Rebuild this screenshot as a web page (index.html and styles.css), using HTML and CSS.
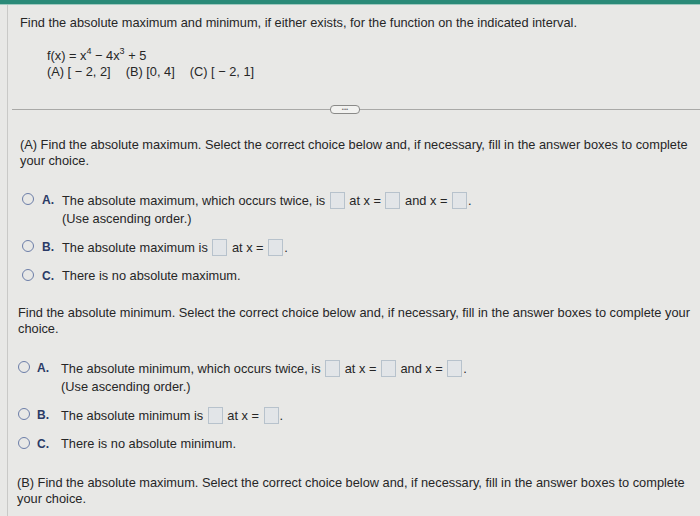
FILE: index.html
```html
<!DOCTYPE html>
<html>
<head>
<meta charset="utf-8">
<link rel="stylesheet" href="styles.css">
</head>
<body>
<div class="topbar"></div>
<div class="page">
  <div class="question">
    <p class="prompt">Find the absolute maximum and minimum, if either exists, for the function on the indicated interval.</p>
    <div class="func">
      <div>f(x) = x<sup>4</sup> − 4x<sup>3</sup> + 5</div>
      <div class="intervals"><span>(A) [ − 2, 2]</span><span>(B) [0, 4]</span><span>(C) [ − 2, 1]</span></div>
    </div>
  </div>
  <div class="divider"><span class="line"></span><span class="pill">•••</span><span class="line"></span></div>
  <div class="part part1">
    <p class="instr">(A) Find the absolute maximum. Select the correct choice below and, if necessary, fill in the answer boxes to complete your choice.</p>
    <div class="choices">
      <div class="choice">
        <span class="radio"></span><span class="letter">A.</span>
        <div class="ctext">
          <div>The absolute maximum, which occurs twice, is <span class="box"></span> at x = <span class="box"></span> and x = <span class="box"></span>.</div>
          <div>(Use ascending order.)</div>
        </div>
      </div>
      <div class="choice">
        <span class="radio"></span><span class="letter">B.</span>
        <div class="ctext"><div>The absolute maximum is <span class="box"></span> at x = <span class="box"></span>.</div></div>
      </div>
      <div class="choice">
        <span class="radio"></span><span class="letter">C.</span>
        <div class="ctext"><div>There is no absolute maximum.</div></div>
      </div>
    </div>
  </div>
  <div class="part part2">
    <p class="instr">Find the absolute minimum. Select the correct choice below and, if necessary, fill in the answer boxes to complete your choice.</p>
    <div class="choices">
      <div class="choice">
        <span class="radio"></span><span class="letter">A.</span>
        <div class="ctext">
          <div>The absolute minimum, which occurs twice, is <span class="box"></span> at x = <span class="box"></span> and x = <span class="box"></span>.</div>
          <div>(Use ascending order.)</div>
        </div>
      </div>
      <div class="choice">
        <span class="radio"></span><span class="letter">B.</span>
        <div class="ctext"><div>The absolute minimum is <span class="box"></span> at x = <span class="box"></span>.</div></div>
      </div>
      <div class="choice">
        <span class="radio"></span><span class="letter">C.</span>
        <div class="ctext"><div>There is no absolute minimum.</div></div>
      </div>
    </div>
  </div>
  <div class="part part3">
    <p class="instr">(B) Find the absolute maximum. Select the correct choice below and, if necessary, fill in the answer boxes to complete your choice.</p>
  </div>
</div>
</body>
</html>
```
FILE: styles.css
```css
html, body {
  margin: 0;
  padding: 0;
  background: #e8e8e6;
}
body {
  font-family: "Liberation Sans", Arial, sans-serif;
  font-size: 12.8px;
  line-height: 16px;
  color: #262626;
  width: 700px;
  height: 516px;
  overflow: hidden;
}
.topbar {
  height: 4px;
  background: #2a8a78;
  border-bottom: 1px solid #9fc9c0;
}
.page {
  margin-left: 7px;
  border-left: 1px solid #c9c9c7;
  min-height: 520px;
  padding-top: 10px;
}
p { margin: 0; }
.question { padding-left: 12px; }
.prompt { margin-top: 0; }
.func {
  margin-top: 17px;
  padding-left: 27px;
}
.func sup {
  font-size: 9px;
  line-height: 0;
  vertical-align: 6px;
}
.intervals {
  display: flex;
  gap: 15px;
  margin-top: 0;
}
.divider {
  display: flex;
  align-items: center;
  margin: 25px 0 0 4px;
  height: 9px;
}
.divider .line {
  flex: 1;
  height: 1px;
  background: #a9a9a7;
}
.divider .line:first-child { flex: 0 0 318px; }
.pill {
  width: 28px;
  height: 7px;
  border: 1px solid #8a8a88;
  border-radius: 4px;
  background: #f2f2f0;
  font-size: 6px;
  line-height: 7px;
  text-align: center;
  color: #777;
}
.part { padding-right: 8px; }
.part1 { margin-top: 23px; padding-left: 12px; }
.choices {
  margin-top: 23px;
  display: flex;
  flex-direction: column;
  gap: 12px;
}
.part1 .choices { padding-left: 2px; }
.choice {
  display: flex;
  align-items: flex-start;
}
.radio {
  width: 10px;
  height: 10px;
  border: 1.5px solid #6c7ea8;
  border-radius: 50%;
  margin-top: 1px;
  flex: none;
}
.letter {
  font-weight: bold;
  color: #2b3a66;
  font-size: 12px;
  margin-left: 8px;
  width: 20px;
  flex: none;
}
.ctext div { white-space: nowrap; }
.ctext div + div { margin-top: 2px; }
.box {
  display: inline-block;
  width: 13px;
  height: 15px;
  border: 1px solid #b7c2cc;
  background: #e2e5e8;
  vertical-align: -4px;
  margin: 0 1px;
}
.part2 { margin-top: 21px; padding-left: 10px; }
.part2 .choices { padding-left: 0; }
.part2 .letter { margin-left: 7px; width: 24px; }
.part3 { margin-top: 23px; padding-left: 9px; }
```
